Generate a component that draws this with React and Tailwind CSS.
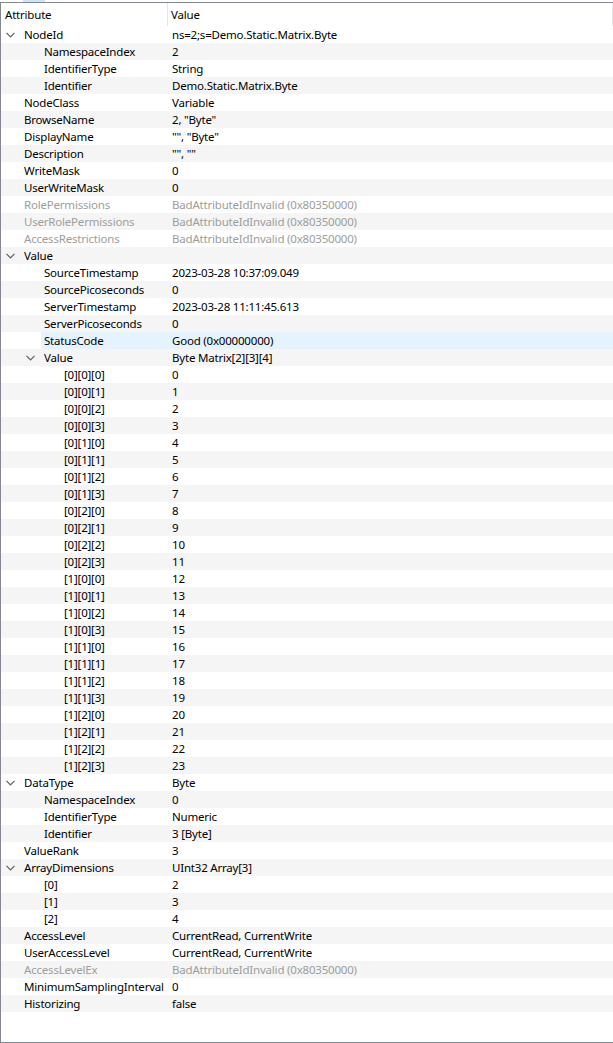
const rows = [
  [0, 'NodeId', 'ns=2;s=Demo.Static.Matrix.Byte', 'open'],
  [1, 'NamespaceIndex', '2'],
  [1, 'IdentifierType', 'String'],
  [1, 'Identifier', 'Demo.Static.Matrix.Byte'],
  [0, 'NodeClass', 'Variable'],
  [0, 'BrowseName', '2, "Byte"'],
  [0, 'DisplayName', '"", "Byte"'],
  [0, 'Description', '"", ""'],
  [0, 'WriteMask', '0'],
  [0, 'UserWriteMask', '0'],
  [0, 'RolePermissions', 'BadAttributeIdInvalid (0x80350000)', 'off'],
  [0, 'UserRolePermissions', 'BadAttributeIdInvalid (0x80350000)', 'off'],
  [0, 'AccessRestrictions', 'BadAttributeIdInvalid (0x80350000)', 'off'],
  [0, 'Value', '', 'open'],
  [1, 'SourceTimestamp', '2023-03-28 10:37:09.049'],
  [1, 'SourcePicoseconds', '0'],
  [1, 'ServerTimestamp', '2023-03-28 11:11:45.613'],
  [1, 'ServerPicoseconds', '0'],
  [1, 'StatusCode', 'Good (0x00000000)', 'hover'],
  [1, 'Value', 'Byte Matrix[2][3][4]', 'open'],
]

// matrix elements
let n = 0
for (let i = 0; i < 2; i++)
  for (let j = 0; j < 3; j++)
    for (let k = 0; k < 4; k++) rows.push([2, `[${i}][${j}][${k}]`, String(n++)])

rows.push(
  [0, 'DataType', 'Byte', 'open'],
  [1, 'NamespaceIndex', '0'],
  [1, 'IdentifierType', 'Numeric'],
  [1, 'Identifier', '3 [Byte]'],
  [0, 'ValueRank', '3'],
  [0, 'ArrayDimensions', 'UInt32 Array[3]', 'open'],
  [1, '[0]', '2'],
  [1, '[1]', '3'],
  [1, '[2]', '4'],
  [0, 'AccessLevel', 'CurrentRead, CurrentWrite'],
  [0, 'UserAccessLevel', 'CurrentRead, CurrentWrite'],
  [0, 'AccessLevelEx', 'BadAttributeIdInvalid (0x80350000)', 'off'],
  [0, 'MinimumSamplingInterval', '0'],
  [0, 'Historizing', 'false'],
)

const spacerW = ['w-[20px]', 'w-[40px]', 'w-[60px]']
const nameW = ['w-[148px]', 'w-[128px]', 'w-[108px]']

function Chevron() {
  return (
    <svg width="9" height="6" viewBox="0 0 9 6" className="mr-[6px]">
      <path d="M0.5 0.8 L4.5 4.8 L8.5 0.8" fill="none" stroke="#606060" strokeWidth="1.2" />
    </svg>
  )
}

function Row({ level, name, value, flag, index }) {
  const off = flag === 'off'
  return (
    <div className={`flex h-[17px] ${index % 2 ? 'bg-[#f5f5f5]' : 'bg-white'}`}>
      <div className={`${spacerW[level]} shrink-0 flex items-center justify-end`}>
        {flag === 'open' && <Chevron />}
      </div>
      <div className={`flex flex-1 items-center pl-[3px] ${flag === 'hover' ? 'bg-[#e5f3ff]' : ''} ${off ? 'text-[#9d9d9d]' : 'text-black'}`}>
        <span className={`${nameW[level]} shrink-0 whitespace-nowrap overflow-hidden`}>{name}</span>
        <span className="whitespace-nowrap">{value}</span>
      </div>
    </div>
  )
}

export default function App() {
  return (
    <div className="w-[613px] h-[1043px] bg-white overflow-hidden text-[11.5px] tracking-[-0.2px] leading-[17px]" style={{ fontFamily: '"Noto Sans", "Open Sans", sans-serif' }}>
      {/* tab stub above the view */}
      <div className="h-[2px] flex">
        <div className="w-[23px]" />
        <div className="w-[22px] bg-[#cce4f7]" />
      </div>

      <div className="h-[1041px] border-t border-l border-b border-[#828790] flex flex-col">
        {/* Header */}
        <div className="h-[23px] flex shrink-0 bg-white">
          <div className="w-[167px] pl-[4px] flex items-center border-r border-[#e5e5e5]">Attribute</div>
          <div className="flex-1 pl-[3px] flex items-center border-r border-[#e5e5e5]">Value</div>
        </div>

        {rows.map(([level, name, value, flag], i) => (
          <Row key={i} index={i} level={level} name={name} value={value} flag={flag} />
        ))}
      </div>
    </div>
  )
}
